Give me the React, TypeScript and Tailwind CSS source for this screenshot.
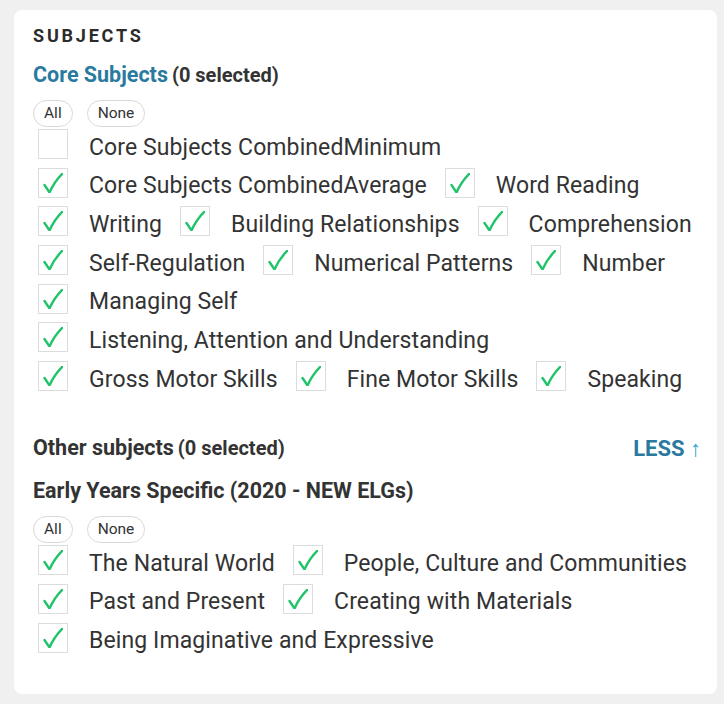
import React from 'react';

const font = { fontFamily: 'Roboto, "Liberation Sans", sans-serif' };

const Check = () => (
  <svg width="20" height="20" viewBox="0 0 20 20" fill="none">
    <path d="M1.5 12 L6.5 19.5 Q11 9 19.5 0.5" stroke="#22c36a" strokeWidth="2.4" strokeLinecap="round" strokeLinejoin="round" />
  </svg>
);

const Item = ({ label, checked = true }: { label: string; checked?: boolean }) => (
  <div className="flex items-center">
    <span className="w-[30px] h-[30px] border border-[#dcdcdc] bg-white flex items-center justify-center">
      {checked && <Check />}
    </span>
    <span className="ml-[21px] mt-[6px] text-[23px] tracking-[0.1px] text-[#333] leading-none">{label}</span>
  </div>
);

const Pills = () => (
  <div className="flex gap-[14px] mb-[2px]">
    <button className="h-[27px] px-[10px] rounded-full border border-[#d8d8d8] text-[15.5px] text-[#333] bg-white leading-none">All</button>
    <button className="h-[27px] px-[10px] rounded-full border border-[#d8d8d8] text-[15.5px] text-[#333] bg-white leading-none">None</button>
  </div>
);

const Grid = ({ items }: { items: { label: string; checked?: boolean }[] }) => (
  <div className="flex flex-wrap gap-x-[18px] gap-y-[8.7px] pl-[5px]">
    {items.map((it) => (
      <Item key={it.label} label={it.label} checked={it.checked} />
    ))}
  </div>
);

export default function App() {
  const core = [
    { label: 'Core Subjects CombinedMinimum', checked: false },
    { label: 'Core Subjects CombinedAverage' },
    { label: 'Word Reading' },
    { label: 'Writing' },
    { label: 'Building Relationships' },
    { label: 'Comprehension' },
    { label: 'Self-Regulation' },
    { label: 'Numerical Patterns' },
    { label: 'Number' },
    { label: 'Managing Self' },
    { label: 'Listening, Attention and Understanding' },
    { label: 'Gross Motor Skills' },
    { label: 'Fine Motor Skills' },
    { label: 'Speaking' },
  ];
  const early = [
    { label: 'The Natural World' },
    { label: 'People, Culture and Communities' },
    { label: 'Past and Present' },
    { label: 'Creating with Materials' },
    { label: 'Being Imaginative and Expressive' },
  ];
  return (
    <div className="min-h-[704px] bg-[#f0f0f0] pt-[10px] pl-[14px] pr-[7px]" style={font}>
      <div className="bg-white rounded-[8px] h-[684px] px-[19px] pt-[16px]">
        <h2 className="text-[18px] font-bold tracking-[2.8px] text-[#2b2b2b] leading-[20px]">SUBJECTS</h2>
        <div className="mt-[18px] leading-[22px]">
          <span className="text-[21.5px] font-bold text-[#2a7aa0]">Core Subjects</span>{' '}
          <span className="text-[20px] font-bold text-[#333]">(0 selected)</span>
        </div>
        <div className="mt-[12px]">
          <Pills />
          <Grid items={core} />
        </div>
        <div className="mt-[46px] flex items-center justify-between leading-[22px]">
          <div>
            <span className="text-[21.5px] font-bold text-[#333]">Other subjects</span>{' '}
            <span className="text-[20px] font-bold text-[#333]">(0 selected)</span>
          </div>
          <button className="text-[22px] font-bold text-[#2a7aa0] mr-[-3px]">
            LESS <span className="font-normal text-[#3aa0d8]">↑</span>
          </button>
        </div>
        <div className="mt-[19px] text-[21.5px] font-bold text-[#333] leading-[22px]">Early Years Specific (2020 - NEW ELGs)</div>
        <div className="mt-[14px]">
          <Pills />
          <Grid items={early} />
        </div>
      </div>
    </div>
  );
}
